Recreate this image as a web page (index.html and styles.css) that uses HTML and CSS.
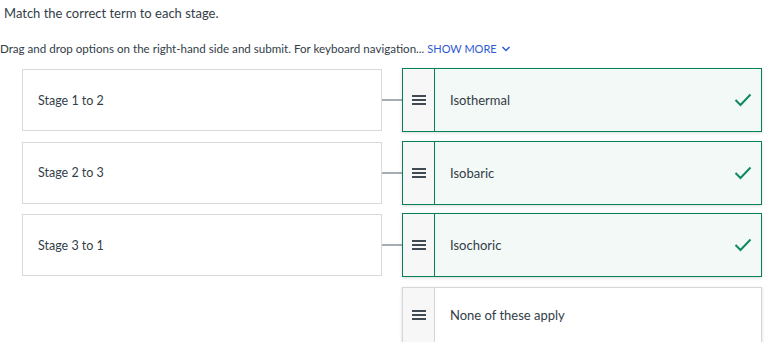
FILE: index.html
```html
<!DOCTYPE html>
<html lang="en">
  <head>
    <meta charset="UTF-8" />
    <title>Matching</title>
    <link rel="stylesheet" href="styles.css">
  </head>
  <body>
    <p class="prompt">Match the correct term to each stage.</p>
    <p class="hint">
      Drag and drop options on the right-hand side and submit. For keyboard navigation...
      <a class="more" href="#">SHOW MORE
        <svg width="10" height="10" viewBox="0 0 10 10"><path d="M1.5 3 L5 6.5 L8.5 3" fill="none" stroke="currentColor" stroke-width="1.5"/></svg>
      </a>
    </p>

    <div class="match">
      <div class="row">
        <div class="stage">Stage 1 to 2</div>
        <div class="link"></div>
        <div class="option correct">
          <span class="handle"><i></i><i></i><i></i></span>
          <span class="label">Isothermal</span>
          <svg class="tick" width="18" height="14" viewBox="0 0 18 14"><path d="M1.5 7 L6.5 12 L16.5 1.5" fill="none" stroke="currentColor" stroke-width="2"/></svg>
        </div>
      </div>
      <div class="row">
        <div class="stage">Stage 2 to 3</div>
        <div class="link"></div>
        <div class="option correct">
          <span class="handle"><i></i><i></i><i></i></span>
          <span class="label">Isobaric</span>
          <svg class="tick" width="18" height="14" viewBox="0 0 18 14"><path d="M1.5 7 L6.5 12 L16.5 1.5" fill="none" stroke="currentColor" stroke-width="2"/></svg>
        </div>
      </div>
      <div class="row">
        <div class="stage">Stage 3 to 1</div>
        <div class="link"></div>
        <div class="option correct">
          <span class="handle"><i></i><i></i><i></i></span>
          <span class="label">Isochoric</span>
          <svg class="tick" width="18" height="14" viewBox="0 0 18 14"><path d="M1.5 7 L6.5 12 L16.5 1.5" fill="none" stroke="currentColor" stroke-width="2"/></svg>
        </div>
      </div>
      <div class="row spare">
        <div class="option">
          <span class="handle"><i></i><i></i><i></i></span>
          <span class="label">None of these apply</span>
        </div>
      </div>
    </div>
  </body>
</html>
```

FILE: styles.css
```css
body {
  font-family: Lato, "Open Sans", sans-serif;
  color: #333d47;
  margin: 0;
  background: #fff;
}

.prompt {
  font-size: 13px;
  margin: 0;
  padding: 4px 0 0 4px;
  line-height: 18px;
}

.hint {
  font-size: 11.6px;
  margin: 20px 0 0 0;
  line-height: 14px;
}
.more {
  color: #2f5ad4;
  font-size: 11px;
  text-decoration: none;
}
.more svg {
  vertical-align: -1px;
  margin-left: 2px;
}

/* Matching area */
.match {
  display: flex;
  flex-direction: column;
  gap: 10.5px;
  padding: 13px 0 0 22px;
  width: 740px;
}
.row {
  display: flex;
  align-items: center;
  height: 62px;
}
.row.spare {
  justify-content: flex-end;
  height: 54px;
  margin-top: 1px;
}
.stage {
  width: 343px;
  height: 60px;
  border: 1px solid #d6d9dd;
  display: flex;
  align-items: center;
  padding-left: 15px;
  font-size: 12.5px;
}
.link {
  width: 20px;
  height: 2px;
  background: #a5adb5;
}

.option {
  width: 358px;
  height: 100%;
  border: 1px solid #d4d6d9;
  display: flex;
  align-items: center;
  background: #fff;
  box-shadow: 0 1px 3px rgba(0, 0, 0, 0.15);
  font-size: 13px;
}
.option.correct {
  border-color: #04805a;
  background: #f3f9f6;
}
.handle {
  width: 31px;
  height: 100%;
  background: #f7f7f7;
  border-right: 1px solid #d4d6d9;
  display: flex;
  flex-direction: column;
  justify-content: center;
  align-items: center;
  gap: 2px;
}
.correct .handle {
  border-right-color: #04805a;
}
.handle i {
  display: block;
  width: 14px;
  height: 2px;
  background: #3f4a55;
}
.label {
  flex: 1;
  padding-left: 15px;
}
.tick {
  color: #0d8a5e;
  margin-right: 9px;
}
```
